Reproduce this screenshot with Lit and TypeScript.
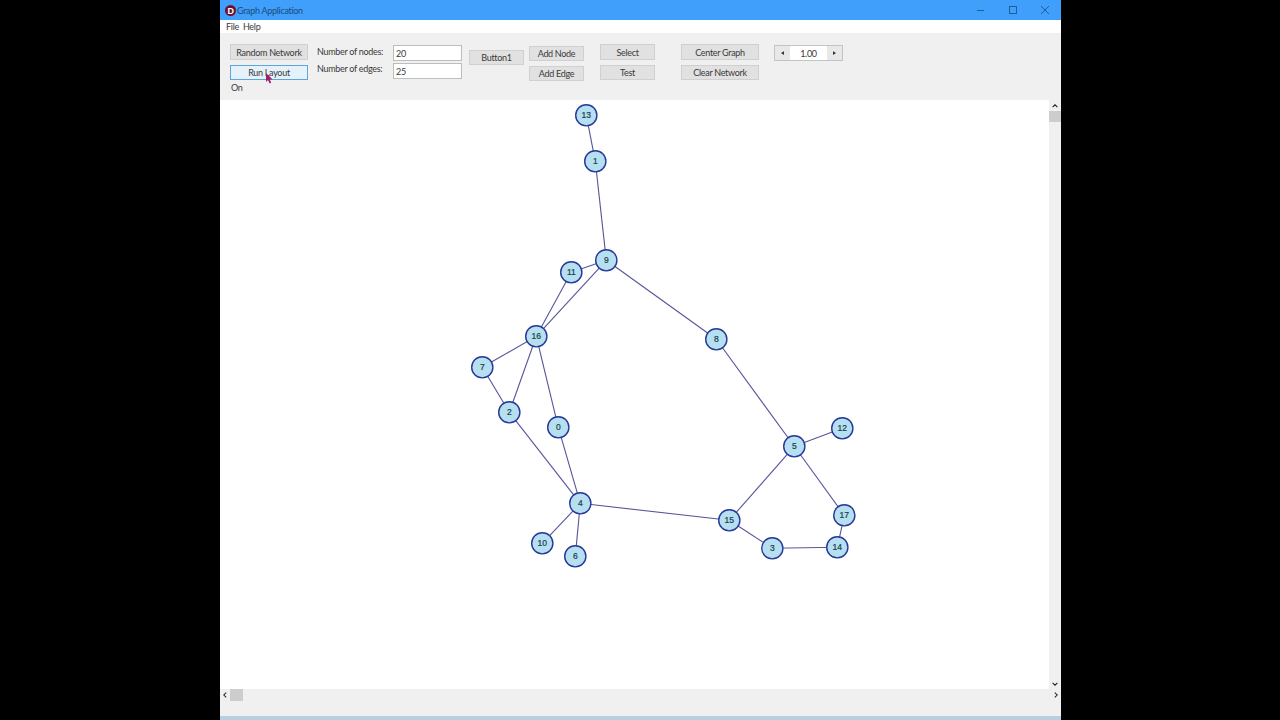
import { LitElement, html, css, svg } from "lit";
import { customElement } from "lit/decorators.js";

const OX = 219.7, OY = 99.7;
const nodes: Record<string, [number, number]> = {
  13: [586, 115], 1: [595, 161], 9: [606, 260], 11: [571, 272], 16: [536, 336], 8: [716, 339],
  7: [482, 367], 2: [509, 412], 0: [558, 427], 5: [794, 446], 12: [842, 428], 4: [580, 503],
  17: [844, 515], 15: [729, 520], 14: [837, 547], 3: [772, 548], 10: [542, 543], 6: [575, 556],
};
const edges: [number, number][] = [
  [13, 1], [1, 9], [9, 11], [9, 16], [11, 16], [9, 8], [16, 7], [16, 2], [16, 0], [7, 2], [2, 4],
  [0, 4], [4, 10], [4, 6], [4, 15], [8, 5], [5, 12], [5, 15], [5, 17], [17, 14], [15, 3], [3, 14],
];

@customElement("app-root")
export class AppRoot extends LitElement {
  static styles = css`
    :host { display: block; width: 1280px; height: 720px; background: #000; overflow: hidden; }
    .window {
      width: 841px; height: 720px; margin-left: 220px; background: #fff; display: flex; flex-direction: column;
      font-family: Lato, Roboto, "Liberation Sans", sans-serif; font-size: 9px; letter-spacing: -0.3px; color: #3a3a3a;
    }
    .title { height: 20px; background: #3f9ffb; display: flex; align-items: center; flex: none; padding-left: 5px; color: #1a4a80; }
    .logo { width: 11px; height: 11px; margin-right: 1px; flex: none; }
    .title-text { font-size: 9px; flex: 1; }
    .ctl { width: 32px; height: 20px; display: flex; align-items: center; justify-content: center; }
    .ctl svg { width: 10px; height: 10px; }
    .menu { height: 13px; flex: none; display: flex; gap: 4px; padding-left: 6px; align-items: center; }
    .toolbar { height: 67px; flex: none; background: #f0f0f0; display: flex; align-items: flex-start; padding-left: 10px; }
    .col { display: flex; flex-direction: column; }
    .btn {
      box-sizing: border-box; display: flex; align-items: center; justify-content: center;
      background: #e1e1e1; border: 1px solid #d0d0d0; color: #3a3a3a; white-space: nowrap;
    }
    .hot { background: #e5f1fb; border-color: #5ca6d8; position: relative; }
    .cursor { position: absolute; left: 35px; top: 7px; width: 7px; height: 11px; }
    .c1 { width: 78px; margin-top: 11px; margin-right: 9px; }
    .c1 .btn { height: 16px; }
    .c1 .btn + .btn { margin-top: 5px; height: 15px; }
    .on { margin: 2px 0 0 1px; line-height: 12px; }
    .labels { width: 76px; margin-top: 12px; white-space: nowrap; }
    .labels div { height: 17px; line-height: 14px; }
    .inputs { margin-top: 12px; margin-right: 7px; }
    .input {
      box-sizing: border-box; width: 69px; height: 16px; margin-bottom: 2px; background: #fff;
      border: 1px solid #bdbdbd; padding-left: 2px; padding-top: 1px; line-height: 13px; display: block;
    }
    .b1 { width: 55px; height: 15px; margin-top: 17px; margin-right: 5px; }
    .c2 { width: 55px; margin-top: 13px; margin-right: 16px; gap: 5px; }
    .c2 .btn { height: 15px; }
    .c3 { width: 55px; margin-top: 11px; margin-right: 26px; gap: 5px; }
    .c3 .btn, .c4 .btn { height: 16px; }
    .c3 .btn + .btn, .c4 .btn + .btn { height: 15px; }
    .c4 { width: 78px; margin-top: 11px; margin-right: 15px; gap: 5px; }
    .spin {
      box-sizing: border-box; width: 69px; height: 16px; margin-top: 12px; display: flex; align-items: stretch;
      background: #fff; border: 1px solid #c4c4c4;
    }
    .arrow { width: 15px; background: #e8e8e8; display: flex; align-items: center; justify-content: center; font-size: 0; }
    .arrow svg { width: 3px; height: 4px; }
    .val { flex: 1; text-align: center; line-height: 14px; padding-top: 1px; }
    .main { flex: 1; display: flex; min-height: 0; }
    .canvas { flex: 1; position: relative; overflow: hidden; }
    .canvas svg { position: absolute; left: 0; top: 0; width: 829px; height: 589px; }
    .vbar { width: 12px; background: #f0f0f0; display: flex; flex-direction: column; align-items: stretch; }
    .bar-btn { height: 11px; display: flex; align-items: center; justify-content: center; flex: none; }
    .bar-btn svg { width: 6px; height: 4px; }
    .vthumb { height: 11px; background: #cdcdcd; }
    .vspace { flex: 1; }
    .hbar { height: 27px; flex: none; background: #f0f0f0; display: flex; align-items: flex-start; }
    .h-btn { width: 10px; height: 12px; display: flex; align-items: center; justify-content: center; flex: none; }
    .h-btn svg { width: 4px; height: 6px; }
    .hthumb { width: 13px; height: 12px; background: #cdcdcd; flex: none; }
    .hspace { flex: 1; }
    .edge { height: 4px; flex: none; background: #b9cfe0; }
    .lbl { font-family: "Liberation Sans", Roboto, sans-serif; font-size: 8.5px; letter-spacing: 0; fill: #14404f; stroke: #14404f; stroke-width: 0.2; text-anchor: middle; }
  `;

  render() {
    return html`
      <div class="window">
        <div class="title">
          <svg class="logo" viewBox="0 0 11 11"><circle cx="5.5" cy="5.5" r="5.5" fill="#6e0f2c"/><text x="5.5" y="8.8" font-size="9" font-weight="700" fill="#fff" text-anchor="middle" font-family="Liberation Sans, sans-serif">D</text></svg>
          <div class="title-text">Graph Application</div>
          <div class="ctl"><svg viewBox="0 0 10 10"><path d="M1 5.5H8" stroke="#1f5f99" stroke-width="1" fill="none"/></svg></div>
          <div class="ctl"><svg viewBox="0 0 10 10"><rect x="1.5" y="1.5" width="7" height="7" stroke="#1f5f99" stroke-width="1" fill="none"/></svg></div>
          <div class="ctl"><svg viewBox="0 0 10 10"><path d="M1 1L9 9M9 1L1 9" stroke="#1f5f99" stroke-width="1" fill="none"/></svg></div>
        </div>
        <div class="menu"><span>File</span><span>Help</span></div>
        <div class="toolbar">
          <div class="col c1">
            <div class="btn">Random Network</div>
            <div class="btn hot">Run Layout
              <svg class="cursor" viewBox="0 0 7 11"><path d="M0 0V9L2 7L3.6 10.5L5.2 9.8L3.8 6.6H6.6Z" fill="#a01e6e"/></svg>
            </div>
            <div class="on">On</div>
          </div>
          <div class="col labels"><div>Number of nodes:</div><div>Number of edges:</div></div>
          <div class="col inputs"><span class="input">20</span><span class="input">25</span></div>
          <div class="btn b1">Button1</div>
          <div class="col c2"><div class="btn">Add Node</div><div class="btn">Add Edge</div></div>
          <div class="col c3"><div class="btn">Select</div><div class="btn">Test</div></div>
          <div class="col c4"><div class="btn">Center Graph</div><div class="btn">Clear Network</div></div>
          <div class="spin">
            <div class="arrow"><svg viewBox="0 0 4 5"><path d="M4 0V5L0 2.5Z" fill="#333"/></svg></div>
            <div class="val">1.00</div>
            <div class="arrow"><svg viewBox="0 0 4 5"><path d="M0 0V5L4 2.5Z" fill="#333"/></svg></div>
          </div>
        </div>
        <div class="main">
          <div class="canvas">
            <svg viewBox="0 0 829 589">
              ${edges.map(([a, b]) => {
                const p = nodes[a], q = nodes[b];
                return svg`<line x1=${p[0] - OX} y1=${p[1] - OY} x2=${q[0] - OX} y2=${q[1] - OY} stroke="#55559a" stroke-width="1.1"/>`;
              })}
              ${Object.entries(nodes).map(([k, p]) => svg`
                <circle cx=${p[0] - OX} cy=${p[1] - OY} r="10.6" fill="#b6dff0" stroke="#26389a" stroke-width="1.4"/>
                <text class="lbl" x=${p[0] - OX} y=${p[1] - OY + 3}>${k}</text>`)}
            </svg>
          </div>
          <div class="vbar">
            <div class="bar-btn"><svg viewBox="0 0 7 5"><path d="M0.5 4L3.5 1L6.5 4" stroke="#222" stroke-width="1.3" fill="none"/></svg></div>
            <div class="vthumb"></div>
            <div class="vspace"></div>
            <div class="bar-btn"><svg viewBox="0 0 7 5"><path d="M0.5 1L3.5 4L6.5 1" stroke="#222" stroke-width="1.3" fill="none"/></svg></div>
          </div>
        </div>
        <div class="hbar">
          <div class="h-btn"><svg viewBox="0 0 5 7"><path d="M4 0.5L1 3.5L4 6.5" stroke="#222" stroke-width="1.3" fill="none"/></svg></div>
          <div class="hthumb"></div>
          <div class="hspace"></div>
          <div class="h-btn"><svg viewBox="0 0 5 7"><path d="M1 0.5L4 3.5L1 6.5" stroke="#222" stroke-width="1.3" fill="none"/></svg></div>
        </div>
        <div class="edge"></div>
      </div>
    `;
  }
}
